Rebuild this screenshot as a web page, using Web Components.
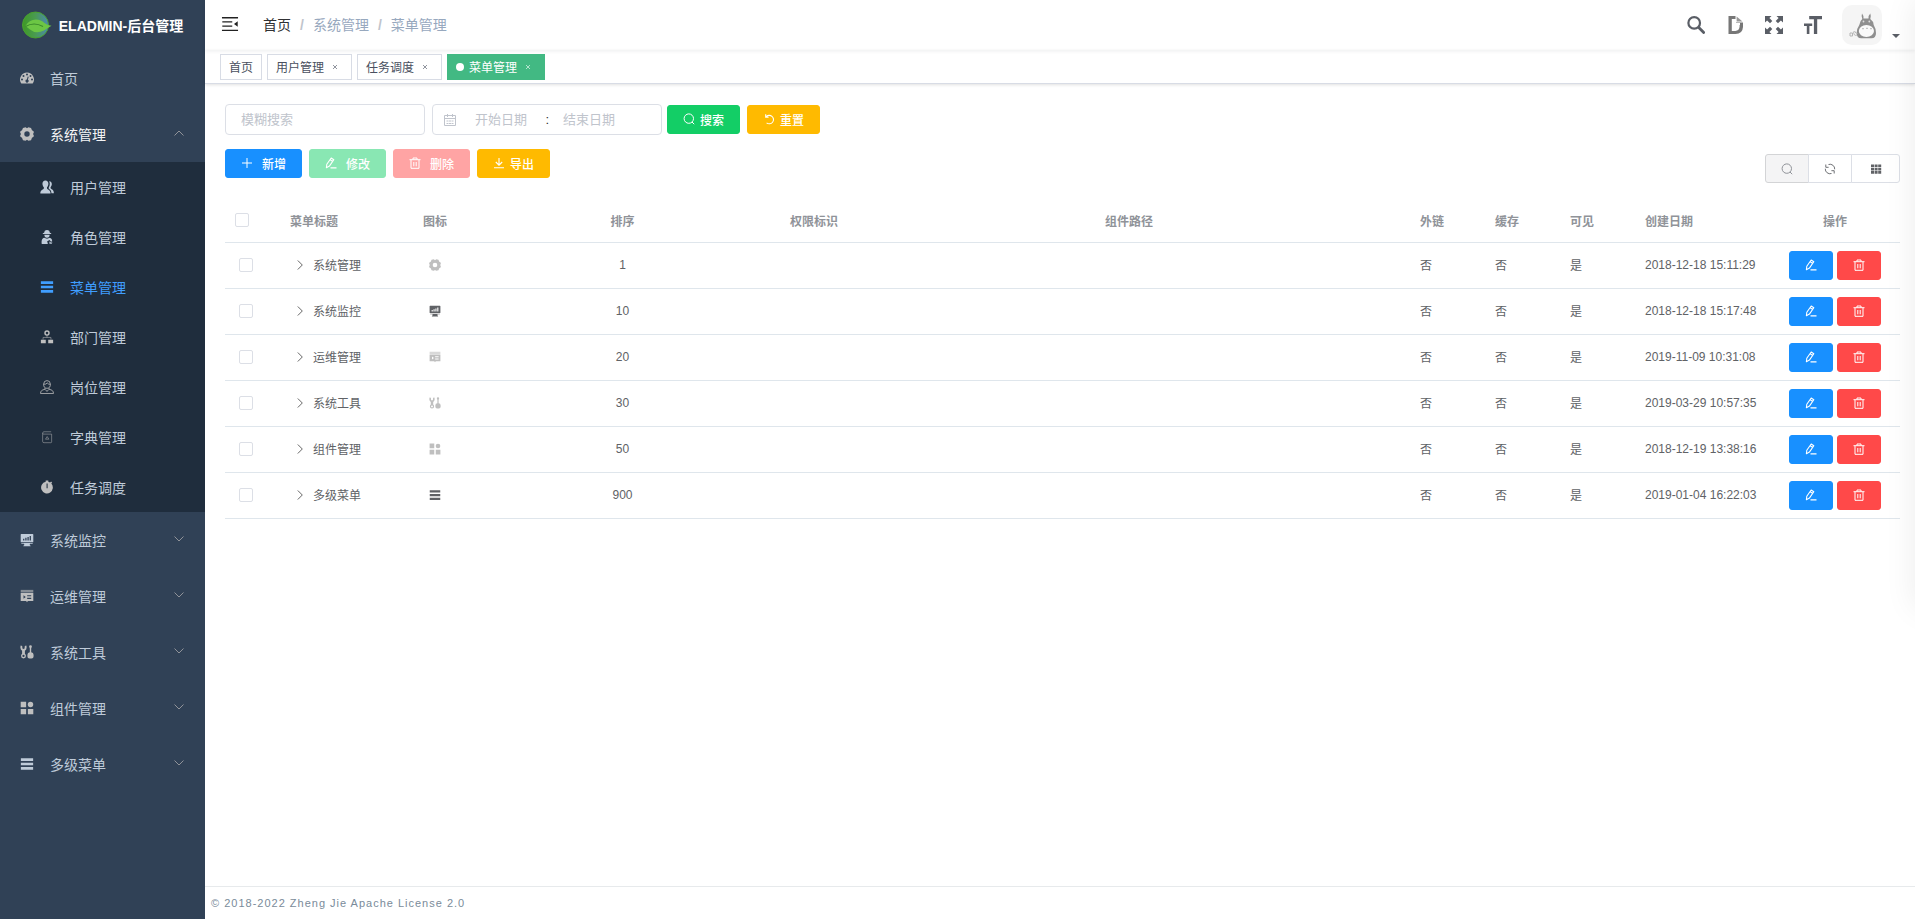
<!DOCTYPE html>
<html lang="zh-CN">
<head>
<meta charset="utf-8">
<meta name="viewport" content="width=device-width, initial-scale=1">
<title>菜单管理 - ELADMIN</title>
<style>
  html, body { margin: 0; padding: 0; }
  body {
    font-family: "Liberation Sans", "Noto Sans CJK SC", sans-serif;
    font-size: 14px;
    color: #606266;
    background: #fff;
  }
</style>
</head>
<body>
<ea-app>
  <ea-sidebar slot="side"></ea-sidebar>
  <ea-navbar slot="top"></ea-navbar>
  <ea-tags slot="top"></ea-tags>
  <ea-toolbar></ea-toolbar>
  <ea-table></ea-table>
  <ea-footer slot="bottom">© 2018-2022 Zheng Jie Apache License 2.0</ea-footer>
</ea-app>

<script>
/* ---------- icon set: [viewBox, markup] ---------- */
const S = 'fill="none" stroke="currentColor" ';
const ICONS = {
  dashboard: ['0 0 28 28', '<path fill="currentColor" fill-rule="evenodd" d="M14 3A14 14 0 0 0 2.300 24.500Q2.600 25 3.200 25H24.800Q25.400 25 25.700 24.500A14 14 0 0 0 14 3ZM4 15a2 2 0 1 1 0 4 2 2 0 0 1 0-4ZM7 8a2 2 0 1 1 0 4 2 2 0 0 1 0-4ZM14 5a2 2 0 1 1 0 4 2 2 0 0 1 0-4ZM21 8a2 2 0 1 1 0 4 2 2 0 0 1 0-4ZM24 15a2 2 0 1 1 0 4 2 2 0 0 1 0-4ZM15.400 11.200l2 .5-1.600 6A3 3 0 1 1 13.800 17.200Z"/>'],
  gear: ['0 0 16 16', '<path fill="currentColor" fill-rule="evenodd" d="M3.400 1 6.400.4 8 1.500 9.600.4l3 .6 1.100 2.600 1.800 1.200.3 1.600-.9 1.600.9 1.600-.3 1.600-1.800 1.200L12.600 15l-3 .6L8 14.500l-1.600 1.100-3-.6-1.100-2.600L.5 11.200.2 9.600 1.100 8 .2 6.400.5 4.800 2.300 3.600ZM8 4.900a3.100 3.100 0 1 0 0 6.200 3.100 3.100 0 0 0 0-6.200Z"/>'],
  peoples: ['0 0 16 16', '<path fill="currentColor" d="M6.200.5c2.200 0 3.400 1.600 3.400 3.800 0 1.700-.8 3.300-1.600 4.100v1.300c.3 1.200 4 1.600 4 5.200v.6H.4v-.6c0-3.600 3.700-4 4-5.200V8.400C3.600 7.600 2.800 6 2.800 4.300 2.800 2.100 4 .5 6.200.5ZM10.400 1.300c2 0 3.100 1.400 3.100 3.400 0 1.500-.7 2.900-1.400 3.600v1.200c.3 1 3.700 1.400 3.700 4.900v.6h-2.700c0-3.600-2.500-4.300-3.200-5.400l.1-1.100c.8-1.100 1.200-2.600 1.200-4.200 0-1.100-.3-2.200-.8-3Z"/>'],
  role: ['0 0 16 16', '<path fill="currentColor" d="M5.500.8Q8-.6 10.500.8l.8 2.200 1.500.7v1H3.200v-1L4.700 3ZM5 5.500h6Q11 8.800 8 8.800T5 5.500ZM4.700 8.800 8 10l3.300-1.200q2.700 1 2.700 4l-1.500.5-1.500-1.800-2.800 1.300.8 3.100H2Q1 10 4.700 8.800ZM10.700 13.200l1.800 1 1.700.2-.8 1.300h-2.600Z"/>'],
  menu: ['0 0 16 16', '<path fill="currentColor" d="M1 1.500h14v3H1zM1 6.500h14v3H1zM1 11.500h14v3H1z"/>'],
  dept: ['0 0 16 16', '<circle cx="8" cy="3.500" r="2.300" '+S+'stroke-width="1.600"/><path '+S+'stroke-width="1" opacity=".6" d="M8 6v2.500M3.500 11V8.500h9V11"/><path fill="currentColor" d="M1 11h5.600v4H1zM9.400 11H15v4H9.400z"/>'],
  job: ['0 0 16 16', '<g '+S+'stroke-width=".9"><path d="M4.200 4.500Q4.400.7 8 .7t3.800 3.800Q12.200 9.300 8 9.500 3.800 9.300 4.200 4.500ZM4.200 4.800Q7 5.200 8.300 3.400 9.500 5 11.800 4.900M5.800 9l-.3 1.700Q.6 11.300.6 15.400h14.800q0-4.100-4.900-4.700L10.200 9M6 10.800l2 2.300 2-2.300"/></g>'],
  dict: ['0 0 16 16', '<g '+S+'stroke-width="1" opacity=".55"><path d="M3 3.700V13q0 1.500 1.500 1.500h7.800q1 0 1-1V4.700H4Q3 4.500 3 3.400T4.500 2h8.300M6.300 10.500 8.200 7.500l1.900 3Z"/></g>'],
  timing: ['0 0 16 16', '<path fill="currentColor" fill-rule="evenodd" d="M6.500.5h3v1.600l2 .7 1.200-1 1.200 1.200-1 1.100A6.700 6.700 0 1 1 6.500 2.100ZM7.500 4v5.300h1.200V4Z"/>'],
  monitor: ['0 0 16 16', '<path fill="currentColor" fill-rule="evenodd" d="M1.500 1h13q.7 0 .7.700V10q0 .7-.7.700h-13Q.8 10.700.8 10V1.700Q.8 1 1.500 1ZM3.500 6.500v2H5v-2ZM6 5.500v3h1.500v-3ZM8.500 4.500v4H10v-4ZM11 3.300v5.200h1.500V3.300ZM1.500 11.500h13v.8h-3l-.5 1.500q1.200.3 1.200 1.400H3.800q0-1.100 1.200-1.400l-.5-1.500h-3Z"/>'],
  mnt: ['0 0 16 16', '<path fill="currentColor" opacity=".6" d="M.8 1h14.400v3H.8z"/><path fill="currentColor" fill-rule="evenodd" d="M.8 4.600h14.400v9H9L8 15l-1-1.400H.8ZM4 7.200l2.600 2L4 11.200ZM8.200 7v1.400h4.600V7ZM8.200 10v1.400h4.600V10Z"/>'],
  tools: ['0 0 16 16', '<path fill="currentColor" fill-rule="evenodd" d="M.8.6 2.500 1 2.800 4 4 4.600 5.200 4l.3-3 1.700-.4Q8.400 4.900 5.600 6.600V10q1.200 1 1.200 2.600 0 2.800-2.800 2.800t-2.800-2.800Q1.200 11 2.400 10V6.600Q-.4 4.900.8.600ZM4 11.200a1.300 1.300 0 1 0 0 2.600 1.300 1.300 0 0 0 0-2.600ZM12 .4q1.600 0 1.600 1.400L12.800 4v4.400q2.700.3 2.700 2.600v2q0 2.300-2.300 2.300h-2.400q-2.300 0-2.300-2.300v-2q0-2.300 2.700-2.600V4l-.8-2.200Q10.400.4 12 .4Z"/>'],
  blocks: ['0 0 16 16', '<path fill="currentColor" d="M.8.8H7V7H.8zM.8 9H7v6.200H.8zM9 9h6.200v6.200H9z"/><circle cx="12" cy="4" r="3.100" fill="currentColor"/>'],
  hamburger: ['64 64 896 896', '<path fill="currentColor" transform="rotate(180 512 512)" d="M408 442h480c4.400 0 8-3.600 8-8v-56c0-4.400-3.600-8-8-8H408c-4.400 0-8 3.600-8 8v56c0 4.400 3.600 8 8 8zm-8 204c0 4.400 3.600 8 8 8h480c4.400 0 8-3.600 8-8v-56c0-4.400-3.600-8-8-8H408c-4.400 0-8 3.600-8 8v56zm504-486H120c-4.400 0-8 3.600-8 8v56c0 4.400 3.600 8 8 8h784c4.400 0 8-3.600 8-8v-56c0-4.400-3.600-8-8-8zm0 632H120c-4.400 0-8 3.600-8 8v56c0 4.400 3.600 8 8 8h784c4.400 0 8-3.600 8-8v-56c0-4.400-3.600-8-8-8zM142.400 642.100L298.700 519a8.840 8.840 0 0 0 0-13.900L142.400 381.900c-5.800-4.600-14.400-.5-14.400 6.900v246.300a8.900 8.900 0 0 0 14.400 7z"/>'],
  search: ['0 0 18 18', '<circle cx="7.200" cy="6.900" r="5.800" '+S+'stroke-width="2.200"/><path '+S+'stroke-width="2.800" stroke-linecap="round" d="m12 11.700 4.700 4.800"/>'],
  doc: ['0 0 18 18', '<path fill="#777" fill-rule="evenodd" d="M2.500 0H9.500V6.500H17V11Q16.500 18 9.500 18H2.500ZM5.800 3V15H9.300Q13.400 14.600 13.600 10.500V8.300H8.500V3Z"/><path fill="#fff" d="M7 3h3v4h4v2H8Z"/><path fill="#777" opacity=".75" d="M10.600.5 16.500 5.600H10.600Z"/>'],
  full: ['0 0 18 18', '<path fill="currentColor" d="M0 0h6.500L4.400 2.100l2.900 2.900L5 7.300 2.100 4.400 0 6.500ZM18 0v6.500l-2.100-2.100L13 7.300 10.700 5l2.900-2.900L11.500 0ZM0 18v-6.500l2.100 2.100L5 10.700 7.300 13l-2.900 2.900L6.500 18ZM18 18h-6.500l2.100-2.100-2.900-2.900 2.300-2.300 2.900 2.900 2.100-2.100Z"/>'],
  size: ['0 0 18 18', '<path fill="currentColor" d="M5.200 0H18v3.200h-4.800V18H9.900V3.200H5.200ZM0 7.500h8.200v2.600H5.400V18H2.800v-7.900H0Z"/>'],
  caret: ['0 0 8 4', '<path fill="currentColor" d="M0 0h8L4 4Z"/>'],
  up: ['0 0 12 12', '<path '+S+'d="M1.500 8.500 6 4l4.500 4.500"/>'],
  down: ['0 0 12 12', '<path '+S+'d="M1.500 3.500 6 8l4.500-4.500"/>'],
  right: ['0 0 12 12', '<path '+S+'d="M3.800 1.500 8.300 6l-4.500 4.500"/>'],
  close: ['0 0 12 12', '<path '+S+'stroke-width="1.600" d="m2 2 8 8M10 2l-8 8"/>'],
  plus: ['0 0 12 12', '<path '+S+'d="M6 1v10M1 6h10"/>'],
  edit: ['0 0 12 12', '<path '+S+'stroke-width="1.100" stroke-linejoin="round" d="m1.800 7.300 4.400-6.300 2.600 1.800-4.400 6.300L1.400 10.700ZM5.200 2.700l2.500 1.800M5.500 10.900h6"/>'],
  trash: ['0 0 12 12', '<path '+S+'d="M.5 2.700h11M4 2.500V1h4v1.500M2 3v8.300h8V3M4.800 5v4.300M7.200 5v4.300"/>'],
  download: ['0 0 12 12', '<path '+S+'stroke-width="1.100" d="M6 1v7M2.800 5 6 8.200 9.200 5M1 10.800h10"/>'],
  find: ['0 0 12 12', '<circle cx="5.800" cy="5.600" r="4.700" '+S+'/><path '+S+'d="m9 9 2.200 2.200"/>'],
  undo: ['0 0 12 12', '<path '+S+'stroke-width="1.100" d="M2.700 1.300v2.900h2.900M3 4A4.200 4.200 0 1 1 3.600 9.800"/>'],
  refresh: ['0 0 12 12', '<path '+S+'stroke-width=".9" d="M1.800 1.500v2.800h2.800M10.200 10.500V7.700H7.400M10.700 6.300A4.700 4.700 0 0 0 4.500 1.500M1.300 5.700A4.700 4.700 0 0 0 7.500 10.500"/>'],
  grid: ['0 0 12 12', '<path fill="currentColor" d="M1 1.500h3v2.600H1zM4.600 1.500h3v2.600h-3zM8.200 1.500h3v2.600h-3zM1 4.800h3v2.600H1zM4.600 4.800h3v2.600h-3zM8.200 4.800h3v2.600h-3zM1 8.100h3v2.600H1zM4.600 8.100h3v2.600h-3zM8.200 8.100h3v2.600h-3z"/>'],
  calendar: ['0 0 14 14', '<path '+S+'d="M1.500 2.500h11v10h-11zM1.500 5.500h11M4.500 1v3M9.500 1v3M3.500 8h2M6 8h2M8.500 8h2M3.500 10.500h2M6 10.500h2M8.500 10.500h2"/>'],
  logo: ['0 0 30 28', '<defs><linearGradient id="g" x1="0" x2="1"><stop offset="0" stop-color="#3e9a25"/><stop offset=".5" stop-color="#4a9a52"/><stop offset="1" stop-color="#4a86b4"/></linearGradient></defs><circle cx="13.500" cy="14" r="13" fill="url(#g)" stroke="#49a02f"/><path fill="#6cc644" d="M3.500 15Q7 8.500 14 8.500q5 0 8.500 3.500 3.500 2.700 7 2.800Q25 17.500 22 19.500q-8 4-14-1Q5 16 3.500 15Z"/><path '+S+'style="color:#3a8a2c" stroke-width="1.200" d="M3.500 15.500Q12 10.500 21 15.500"/>'],
  avatar: ['0 0 40 40', '<path fill="#8f8f8f" d="M20 8.500q1.500 1.500 1.500 5h5q0-3.500 1.800-5 1 2.500 0 5.400 3 2 3.400 6 2.300 3.500 2.300 8 0 5.300-4.500 5.300H19.200q-4.500 0-4.500-5.300 0-4.500 2.600-8 .6-4.300 3-6-1.200-2.800-.3-5.400Z"/><ellipse cx="24.400" cy="26" rx="7.600" ry="6" fill="#fafafa"/><path '+S+'stroke-width=".8" style="color:#aaa" d="M20 24q1-1.200 2 0M24 23.600q1-1.200 2 0M28 24q1-1.200 2 0"/><circle cx="21.500" cy="16.500" r=".9" fill="#ddd"/><circle cx="27.300" cy="16.500" r=".9" fill="#ddd"/><path '+S+'style="color:#b5b5b5" d="M15 30q-3.500 1.500-3.300-3.500M15.500 28.500q-2 0-3-2.500M8 28h2.500v3H8Z"/>']
};

/* Registers an element whose shadow root is filled by render(host). */
function define(name, render) {
  customElements.define(name, class extends HTMLElement {
    constructor() {
      super();
      this.attachShadow({ mode: 'open' });
    }
    connectedCallback() {
      if (this.shadowRoot.childNodes.length) return;
      const t = document.createElement('template');
      t.innerHTML = render(this);
      this.shadowRoot.append(t.content.cloneNode(true));
    }
  });
}

define('ea-icon', h => {
  const [box, body] = ICONS[h.getAttribute('name')];
  return `<style>
    :host { display: inline-flex; flex: none; width: var(--icon, 12px); height: var(--icon, 12px); }
    svg { display: block; width: 100%; height: 100%; }
  </style><svg viewBox="${box}" aria-hidden="true">${body}</svg>`;
});

define('ea-app', () => `<style>
    :host { display: flex; min-height: 100vh; position: relative; overflow: hidden; }
    .main { flex: 1; min-width: 0; display: flex; flex-direction: column; }
    main { flex: 1; padding: 20px 15px 20px 20px; }
    .drawer { position: absolute; top: 0; left: 100%; width: 260px; height: 608px; box-shadow: 0 0 30px rgba(0, 0, 0, .08); }
  </style>
  <slot name="side"></slot>
  <div class="main">
    <slot name="top"></slot>
    <main><slot></slot></main>
    <slot name="bottom"></slot>
  </div>
  <div class="drawer"></div>`);

define('ea-menu-item', h => {
  const arrow = h.getAttribute('arrow');
  return `<style>
    :host { display: block; color: #bfcbd9; }
    :host([open]) { color: #f4f4f5; }
    :host([active]) { color: #409eff; }
    a { display: flex; align-items: center; height: 56px; padding: 0 20px; color: inherit; text-decoration: none; --icon: 14px; }
    :host([sub]) a { height: 50px; padding-left: 40px; }
    .lead { margin-right: 16px; }
    :host([grey]) .lead { color: #bfbfbf; }
    .arrow { margin-left: auto; padding-bottom: 3px; color: #909399; --icon: 12px; }
  </style>
  <a href="#"><ea-icon class="lead" name="${h.getAttribute('icon')}"></ea-icon><slot></slot>${
    arrow ? `<ea-icon class="arrow" name="${arrow}"></ea-icon>` : ''}</a>`;
});

define('ea-sidebar', () => `<style>
    :host { display: block; flex: none; width: 205px; background: #304156; }
    .logo { display: flex; align-items: center; justify-content: center; gap: 7px; height: 50px; color: #fff; font-weight: 700; font-size: 14px; text-decoration: none; white-space: nowrap; }
    .logo ea-icon { --icon: 30px; }
    .sub { background: #1f2d3d; }
  </style>
  <a class="logo" href="#"><ea-icon name="logo"></ea-icon><span>ELADMIN-后台管理</span></a>
  <nav>
    <ea-menu-item icon="dashboard" grey>首页</ea-menu-item>
    <ea-menu-item icon="gear" grey open arrow="up">系统管理</ea-menu-item>
    <div class="sub">
      <ea-menu-item sub icon="peoples">用户管理</ea-menu-item>
      <ea-menu-item sub icon="role">角色管理</ea-menu-item>
      <ea-menu-item sub icon="menu" active>菜单管理</ea-menu-item>
      <ea-menu-item sub icon="dept" grey>部门管理</ea-menu-item>
      <ea-menu-item sub icon="job" grey>岗位管理</ea-menu-item>
      <ea-menu-item sub icon="dict" grey>字典管理</ea-menu-item>
      <ea-menu-item sub icon="timing" grey>任务调度</ea-menu-item>
    </div>
    <ea-menu-item icon="monitor" arrow="down">系统监控</ea-menu-item>
    <ea-menu-item icon="mnt" grey arrow="down">运维管理</ea-menu-item>
    <ea-menu-item icon="tools" grey arrow="down">系统工具</ea-menu-item>
    <ea-menu-item icon="blocks" grey arrow="down">组件管理</ea-menu-item>
    <ea-menu-item icon="menu" arrow="down">多级菜单</ea-menu-item>
  </nav>`);

define('ea-navbar', () => `<style>
    :host { display: flex; align-items: center; justify-content: space-between; height: 50px; padding: 0 15px 0 16px; box-shadow: 0 1px 4px rgba(0, 21, 41, .08); }
    .left, .right, ol { display: flex; align-items: center; }
    button { display: flex; padding: 0; border: 0; background: none; color: #5a5e66; cursor: pointer; }
    .toggle { --icon: 18px; padding-bottom: 2px; color: #222; margin-right: 24px; }
    ol { list-style: none; margin: 0; padding: 0 0 2px; }
    li + li::before { content: "/"; margin: 0 9px; font-weight: 700; color: #c0c4cc; }
    a { color: #303133; text-decoration: none; }
    li span { color: #97a8be; }
    .right { gap: 21px; --icon: 18px; }
    .user { position: relative; align-items: center; gap: 10px; margin-left: -1px; }
    .user .pic { --icon: 40px; border-radius: 10px; background: #f5f5f5; }
    .user .caret { --icon: 8px; margin-top: 22px; }
  </style>
  <div class="left">
    <button class="toggle" aria-label="折叠菜单"><ea-icon name="hamburger"></ea-icon></button>
    <ol><li><a href="#">首页</a></li><li><span>系统管理</span></li><li><span>菜单管理</span></li></ol>
  </div>
  <div class="right">
    <button aria-label="搜索菜单"><ea-icon name="search"></ea-icon></button>
    <button aria-label="项目文档"><ea-icon name="doc"></ea-icon></button>
    <button aria-label="全屏缩放"><ea-icon name="full"></ea-icon></button>
    <button aria-label="布局设置"><ea-icon name="size"></ea-icon></button>
    <button class="user" aria-label="用户"><ea-icon class="pic" name="avatar"></ea-icon><ea-icon class="caret" name="caret"></ea-icon></button>
  </div>`);

define('ea-tag', h => `<style>
    :host { display: flex; align-items: center; box-sizing: border-box; height: 26px; padding: 0 8px; border: 1px solid #d8dce5; background: #fff; color: #495060; font-size: 12px; }
    :host([active]) { background: #42b983; border-color: #42b983; color: #fff; }
    :host([active]) a::before { content: ""; width: 8px; height: 8px; border-radius: 50%; background: #fff; margin-right: 5px; }
    a { display: flex; align-items: center; color: inherit; text-decoration: none; }
    button { display: flex; align-items: center; justify-content: center; width: 16px; height: 16px; margin-left: 3px; padding: 0; border: 0; background: none; color: inherit; opacity: .75; --icon: 6px; }
  </style>
  <a href="#"><slot></slot></a>${h.hasAttribute('closable') ? '<button aria-label="关闭"><ea-icon name="close"></ea-icon></button>' : ''}`);

define('ea-tags', () => `<style>
    :host { display: flex; align-items: center; gap: 5px; box-sizing: border-box; height: 34px; padding: 0 15px; border-bottom: 1px solid #d8dce5; box-shadow: 0 1px 3px rgba(0, 0, 0, .12); }
  </style>
  <ea-tag>首页</ea-tag>
  <ea-tag closable>用户管理</ea-tag>
  <ea-tag closable>任务调度</ea-tag>
  <ea-tag closable active>菜单管理</ea-tag>`);

define('ea-button', h => `<style>
    :host { display: inline-flex; --c: #1890ff; }
    :host([kind=success]) { --c: #13ce66; }
    :host([kind=warning]) { --c: #ffba00; }
    :host([kind=danger]) { --c: #ff4949; }
    :host([kind=success][disabled]) { --c: #89e7b3; }
    :host([kind=danger][disabled]) { --c: #ffa4a4; }
    button { display: inline-flex; align-items: center; justify-content: center; gap: 5px; box-sizing: border-box; height: 29px; padding: 0 15px 1px; border: 1px solid var(--c); border-radius: 3px; background: var(--c); color: #fff; font: 500 12px "Liberation Sans", "Noto Sans CJK SC", sans-serif; white-space: nowrap; }
    :host([wide]) button { gap: 9px; }
  </style>
  <button ${h.hasAttribute('disabled') ? 'disabled' : ''} ${h.getAttribute('label') ? `aria-label="${h.getAttribute('label')}"` : ''}><ea-icon name="${h.getAttribute('icon')}"></ea-icon><slot></slot></button>`);

define('ea-toolbar', () => `<style>
    :host { display: block; }
    .filters, .actions, .left, .view, .range { display: flex; }
    .filters { align-items: center; gap: 7px; }
    .filters ea-button:first-of-type { margin-left: -2px; }
    input { font: 13px "Liberation Sans", "Noto Sans CJK SC", sans-serif; color: #606266; outline: 0; }
    input::placeholder { color: #c0c4cc; opacity: 1; }
    .blur, .range { box-sizing: border-box; height: 31px; border: 1px solid #dcdfe6; border-radius: 4px; background: #fff; }
    .blur { width: 200px; padding: 0 15px; }
    .range { width: 230px; align-items: center; padding: 0 10px; font-size: 13px; color: #303133; }
    .range ea-icon { --icon: 14px; color: #c0c4cc; margin-right: 4px; }
    .range input { width: 80px; padding: 0; border: 0; background: none; text-align: center; }
    .range span { width: 8px; text-align: right; }
    .actions { justify-content: space-between; min-height: 34px; margin-top: 14px; }
    .left { align-items: flex-start; gap: 7px; }
    .view { align-self: flex-end; }
    .view button { display: flex; align-items: center; justify-content: center; box-sizing: border-box; width: 44px; height: 29px; padding: 0; border: 1px solid #dcdfe6; background: #fff; color: #606266; }
    .view button + button { margin-left: -1px; }
    .view button:first-child { border-color: #d3d4d6; border-radius: 3px 0 0 3px; background: #f4f4f5; color: #909399; }
    .view button:last-child { width: 49px; border-radius: 0 3px 3px 0; }
  </style>
  <div class="filters">
    <input class="blur" placeholder="模糊搜索" aria-label="模糊搜索">
    <div class="range"><ea-icon name="calendar"></ea-icon><input placeholder="开始日期" aria-label="开始日期"><span>:</span><input placeholder="结束日期" aria-label="结束日期"></div>
    <ea-button kind="success" icon="find">搜索</ea-button>
    <ea-button kind="warning" icon="undo">重置</ea-button>
  </div>
  <div class="actions">
    <div class="left">
      <ea-button wide icon="plus">新增</ea-button>
      <ea-button wide kind="success" disabled icon="edit">修改</ea-button>
      <ea-button wide kind="danger" disabled icon="trash">删除</ea-button>
      <ea-button kind="warning" icon="download">导出</ea-button>
    </div>
    <div class="view">
      <button aria-label="搜索"><ea-icon name="find"></ea-icon></button>
      <button aria-label="刷新"><ea-icon name="refresh"></ea-icon></button>
      <button aria-label="列设置"><ea-icon name="grid"></ea-icon></button>
    </div>
  </div>`);

const ROWS = [
  ['系统管理', 'gear', 'light', 1, '2018-12-18 15:11:29'],
  ['系统监控', 'monitor', '', 10, '2018-12-18 15:17:48'],
  ['运维管理', 'mnt', 'light', 20, '2019-11-09 10:31:08'],
  ['系统工具', 'tools', 'light', 30, '2019-03-29 10:57:35'],
  ['组件管理', 'blocks', 'light', 50, '2018-12-19 13:38:16'],
  ['多级菜单', 'menu', '', 900, '2019-01-04 16:22:03']
];

define('ea-table', () => `<style>
    :host { display: block; margin-top: 16px; }
    table { width: 100%; table-layout: fixed; border-collapse: separate; border-spacing: 0; font-size: 12px; color: #606266; }
    th, td { box-sizing: border-box; padding: 0 10px 2px; border-bottom: 1px solid #dfe6ec; text-align: left; vertical-align: middle; }
    th { height: 44px; padding-bottom: 1px; font-weight: 700; color: #909399; }
    td { height: 46px; }
    .c { text-align: center; }
    td:first-child { padding-left: 14px; }
    input { display: block; appearance: none; box-sizing: border-box; width: 14px; height: 14px; margin: 0; border: 1px solid #dcdfe6; border-radius: 2px; background: #fff; }
    .tree { display: flex; align-items: center; }
    .tree button { display: flex; justify-content: center; width: 20px; margin-right: 3px; padding: 0; border: 0; background: none; color: #666; }
    .ic { display: flex; justify-content: center; }
    .light { color: #bfbfbf; }
    .ops { display: flex; gap: 4px; padding-left: 9px; }
    td:last-child { padding-right: 0; padding-bottom: 0; }
  </style>
  <table>
    <colgroup><col style="width:55px"><col style="width:125px"><col style="width:60px"><col><col><col><col style="width:75px"><col style="width:75px"><col style="width:75px"><col style="width:135px"><col style="width:130px"></colgroup>
    <thead><tr><th><input type="checkbox" aria-label="全选"></th><th>菜单标题</th><th class="c">图标</th><th class="c">排序</th><th>权限标识</th><th>组件路径</th><th>外链</th><th>缓存</th><th>可见</th><th>创建日期</th><th class="c">操作</th></tr></thead>
    <tbody>${ROWS.map(([title, icon, tone, sort, date]) => `<tr>
      <td><input type="checkbox" aria-label="选择 ${title}"></td>
      <td><div class="tree"><button aria-label="展开"><ea-icon name="right"></ea-icon></button>${title}</div></td>
      <td><div class="ic ${tone}"><ea-icon name="${icon}"></ea-icon></div></td>
      <td class="c">${sort}</td><td></td><td></td><td>否</td><td>否</td><td>是</td><td>${date}</td>
      <td><div class="ops"><ea-button icon="edit" label="编辑"></ea-button><ea-button kind="danger" icon="trash" label="删除"></ea-button></div></td>
    </tr>`).join('')}</tbody>
  </table>`);

define('ea-footer', () => `<style>
    :host { display: flex; align-items: center; box-sizing: border-box; height: 33px; padding: 0 6px 1px; border-top: 1px solid #e7eaec; font-size: 11px; letter-spacing: 1px; color: #7a8b9a; white-space: nowrap; }
  </style><slot></slot>`);
</script>
</body>
</html>
